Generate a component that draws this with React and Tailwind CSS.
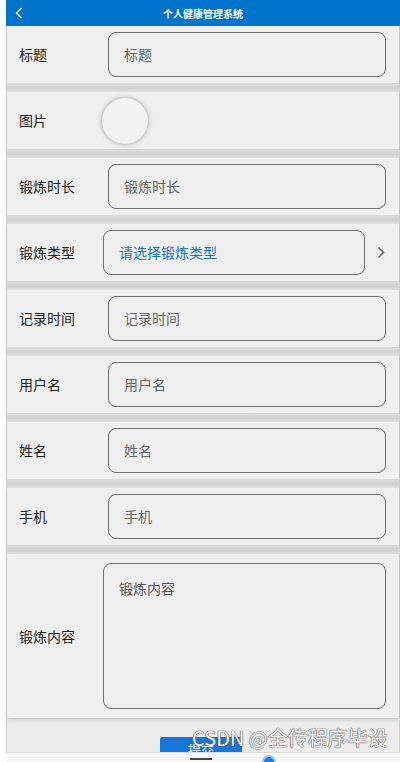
import React from "react";

const font = { fontFamily: '"Noto Sans CJK SC", "Noto Sans", sans-serif' };

function Sep() {
  return <div className="h-[9px] bg-gradient-to-b from-[#dedede] via-[#cfcfcf] to-[#e2e2e2] border-t border-[#d8d8d8]" />;
}

function InputRow({ label, placeholder }) {
  return (
    <div className="h-[57px] flex items-center pl-[12px] pr-[13px] bg-[#efefef] shadow-[0_2px_3px_rgba(0,0,0,0.12)]">
      <div className="w-[89px] text-[14px] text-[#222]">{label}</div>
      <div className="flex-1 h-[45px] border border-[#6f6f6f] rounded-[8px] flex items-center pl-[15px] text-[14px] text-[#666]">
        {placeholder}
      </div>
    </div>
  );
}

export default function App() {
  return (
    <div className="w-[400px] h-[762px] overflow-hidden bg-white flex" style={font}>
      <div className="w-[6px] shrink-0 bg-white" />
      <div className="flex-1 flex flex-col relative bg-[#ececec]">
        <div className="h-[26px] bg-[#0073cc] flex items-center justify-center relative shrink-0">
          <svg className="absolute left-[9px] top-[7px]" width="8" height="12" viewBox="0 0 8 12">
            <path d="M6.5 1 L1.5 6 L6.5 11" fill="none" stroke="#fff" strokeWidth="1.3" />
          </svg>
          <span className="text-white text-[10px] font-bold">个人健康管理系统</span>
        </div>
        <div className="flex flex-col border-l border-r border-[#d0d0d0]">
          <InputRow label="标题" placeholder="标题" />
          <Sep />
          <div className="h-[57px] flex items-center pl-[12px] bg-[#efefef] shadow-[0_2px_3px_rgba(0,0,0,0.12)]">
            <div className="w-[83px] text-[14px] text-[#222]">图片</div>
            <div className="w-[46px] h-[46px] rounded-full bg-[#f2f2f2] shadow-[0_0_5px_rgba(0,0,0,0.35)]" />
          </div>
          <Sep />
          <InputRow label="锻炼时长" placeholder="锻炼时长" />
          <Sep />
          <div className="h-[57px] flex items-center pl-[12px] bg-[#efefef] shadow-[0_2px_3px_rgba(0,0,0,0.12)]">
            <div className="w-[84px] text-[14px] text-[#222]">锻炼类型</div>
            <div className="w-[262px] h-[45px] border border-[#6f6f6f] rounded-[8px] flex items-center pl-[15px] text-[14px] text-[#1a73c8]">
              请选择锻炼类型
            </div>
            <div className="flex-1 flex justify-center pr-[3px]">
              <svg width="8" height="13" viewBox="0 0 8 13">
                <path d="M1.5 1.5 L6.5 6.5 L1.5 11.5" fill="none" stroke="#666" strokeWidth="1.5" />
              </svg>
            </div>
          </div>
          <Sep />
          <InputRow label="记录时间" placeholder="记录时间" />
          <Sep />
          <InputRow label="用户名" placeholder="用户名" />
          <Sep />
          <InputRow label="姓名" placeholder="姓名" />
          <Sep />
          <InputRow label="手机" placeholder="手机" />
          <Sep />
          <div className="h-[164px] flex items-center pl-[12px] pr-[13px] bg-[#efefef] shadow-[0_2px_4px_rgba(0,0,0,0.15)]">
            <div className="w-[84px] text-[14px] text-[#222]">锻炼内容</div>
            <div className="flex-1 h-[146px] border border-[#6f6f6f] rounded-[8px] pl-[15px] pt-[14px] text-[14px] text-[#555]">
              锻炼内容
            </div>
          </div>
        </div>
        <div className="h-[34px] flex items-end shrink-0 border-l border-r border-[#d0d0d0]">
          <div className="w-[82px] h-[15px] bg-[#1976d9] rounded-t-[3px] ml-[153px] flex justify-center pt-[6px] overflow-hidden">
            <span className="text-white text-[13px] leading-none">提交</span>
          </div>
        </div>
        <div className="flex-1 bg-[#f5f5f5] border-t border-[#dcdcdc] relative overflow-hidden">
          <div className="absolute left-[184px] top-[5px] w-[22px] h-[2px] bg-[#444]" />
          <div className="absolute left-[256px] top-[2px] w-[14px] h-[14px] rounded-full bg-[#1a7fe0] border-2 border-[#9ccaf5]" />
        </div>
        <div className="absolute left-[186px] top-[728px] text-[20px] leading-none text-[#f6f6f6] whitespace-nowrap [text-shadow:0_0_1px_#555,0_0_1px_#555,0_0_1px_#777]">
          CSDN @全传程序毕设
        </div>
      </div>
    </div>
  );
}
